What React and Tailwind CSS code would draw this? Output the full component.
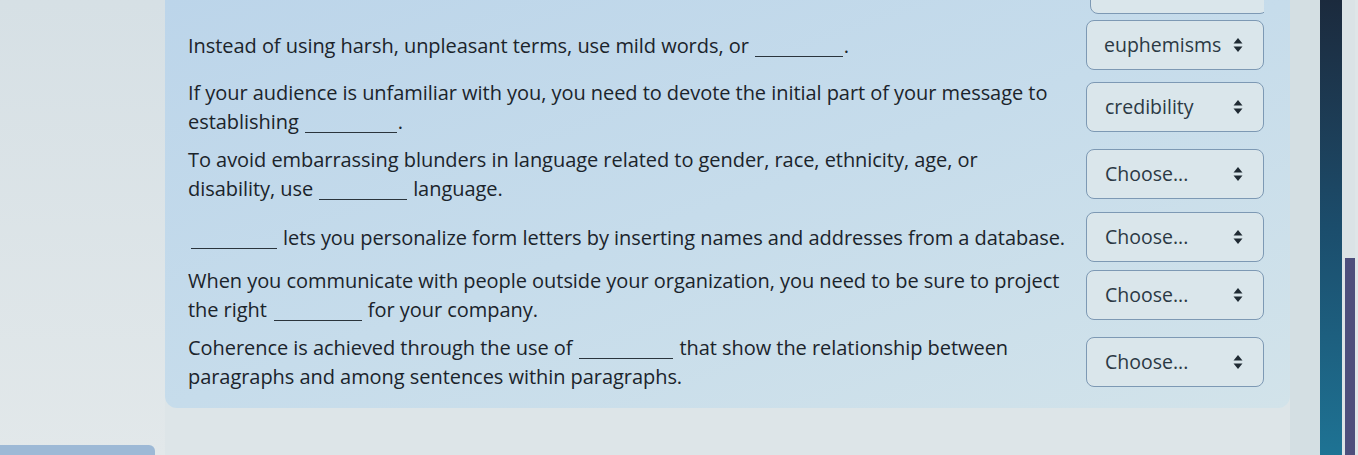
import React from "react";

const font = { fontFamily: '"Open Sans", "Noto Sans", sans-serif' };

function Blank({ w = "w-[88px]", m = "mx-[5px]" }) {
  return <span className={`inline-block ${w} h-[16px] border-b border-[#2a343c] align-[-4px] ${m}`} />;
}

function Arrows() {
  return (
    <svg width="10" height="16" viewBox="0 0 10 16" className="shrink-0">
      <path d="M5 1 L9.5 6.5 L0.5 6.5 Z" fill="#1f2a33" />
      <path d="M5 15 L9.5 9.5 L0.5 9.5 Z" fill="#1f2a33" />
    </svg>
  );
}

function Select({ value, pad = "pl-[17px]" }) {
  return (
    <div
      className={`w-[178px] h-[50px] shrink-0 rounded-lg border-[1.5px] border-[#7d99b4] bg-[#dae6eb] flex items-center justify-between ${pad} pr-[20px] text-[19.5px] text-[#2b3944]`}
    >
      <span>{value}</span>
      <Arrows />
    </div>
  );
}

const rows = [
  {
    h: "h-[62px]",
    value: "euphemisms",
    text: (
      <>
        Instead of using harsh, unpleasant terms, use mild words, or
        <Blank m="ml-[6px] mr-[1px]" />.
      </>
    ),
  },
  {
    h: "h-[62px]",
    value: "credibility",
    text: (
      <>
        If your audience is unfamiliar with you, you need to devote the initial part of your message to
        <br />
        establishing
        <Blank w="w-[92px]" m="ml-[6px] mr-[1px]" />.
      </>
    ),
  },
  {
    h: "h-[72px]",
    value: "Choose...",
    text: (
      <>
        To avoid embarrassing blunders in language related to gender, race, ethnicity, age, or
        <br />
        disability, use
        <Blank w="w-[88px]" m="ml-[6px] mr-[6px]" />language.
      </>
    ),
  },
  {
    h: "h-[54px]",
    value: "Choose...",
    text: (
      <>
        <Blank w="w-[86px]" m="ml-[3px] mr-[6px]" />lets you personalize form letters by inserting names and addresses from a database.
      </>
    ),
  },
  {
    h: "h-[62px]",
    value: "Choose...",
    text: (
      <>
        When you communicate with people outside your organization, you need to be sure to project
        <br />
        the right
        <Blank w="w-[88px]" m="ml-[7px] mr-[6px]" />for your company.
      </>
    ),
  },
  {
    h: "h-[72px]",
    value: "Choose...",
    text: (
      <>
        Coherence is achieved through the use of
        <Blank w="w-[94px]" m="ml-[7px] mr-[6px]" />that show the relationship between
        <br />
        paragraphs and among sentences within paragraphs.
      </>
    ),
  },
];

export default function App() {
  return (
    <div className="w-full h-[455px] overflow-hidden bg-[#dde5e8] flex" style={font}>
      <div className="w-[165px] shrink-0 flex flex-col justify-end bg-gradient-to-b from-[#d6e0e5] to-[#e2e8ea]">
        <div className="w-[155px] h-[10px] rounded-tr-md bg-[#9db9d6]" />
      </div>

      <div className="w-[1125px] shrink-0 self-start h-[408px] rounded-b-xl bg-gradient-to-br from-[#bcd5ea] via-[#c6dceb] to-[#d2e3ea] pl-[23px] pr-[26px] pb-[10px]">
        <div className="h-[14px] flex justify-end items-end overflow-hidden">
          <div className="w-[178px] h-[50px] shrink-0 rounded-lg border-[1.5px] border-[#7d99b4] bg-[#dae6eb] mr-[-4px]" />
        </div>
        {rows.map((r, i) => (
          <div key={i} className={`${r.h} flex items-center justify-between gap-[12px]`}>
            <p className="flex-1 whitespace-nowrap text-[20px] leading-[29px] text-[#1b242b] tracking-[-0.05px]">
              {r.text}
            </p>
            <Select value={r.value} pad={i === 0 ? "pl-[17px]" : "pl-[18px]"} />
          </div>
        ))}
      </div>

      <div className="w-[30px] shrink-0 bg-[#d4dfe3]" />
      <div className="w-[22px] shrink-0 bg-gradient-to-b from-[#1b2a3d] via-[#1b4d6c] to-[#1e7394]" />
      <div className="w-[3px] shrink-0 bg-[#dbe3e6]" />
      <div className="w-[10px] shrink-0 flex flex-col">
        <div className="h-[258px] bg-[#dbe3e6]" />
        <div className="flex-1 bg-[#4d4f7c]" />
      </div>
      <div className="flex-1 bg-[#dfe6e8]" />
    </div>
  );
}
